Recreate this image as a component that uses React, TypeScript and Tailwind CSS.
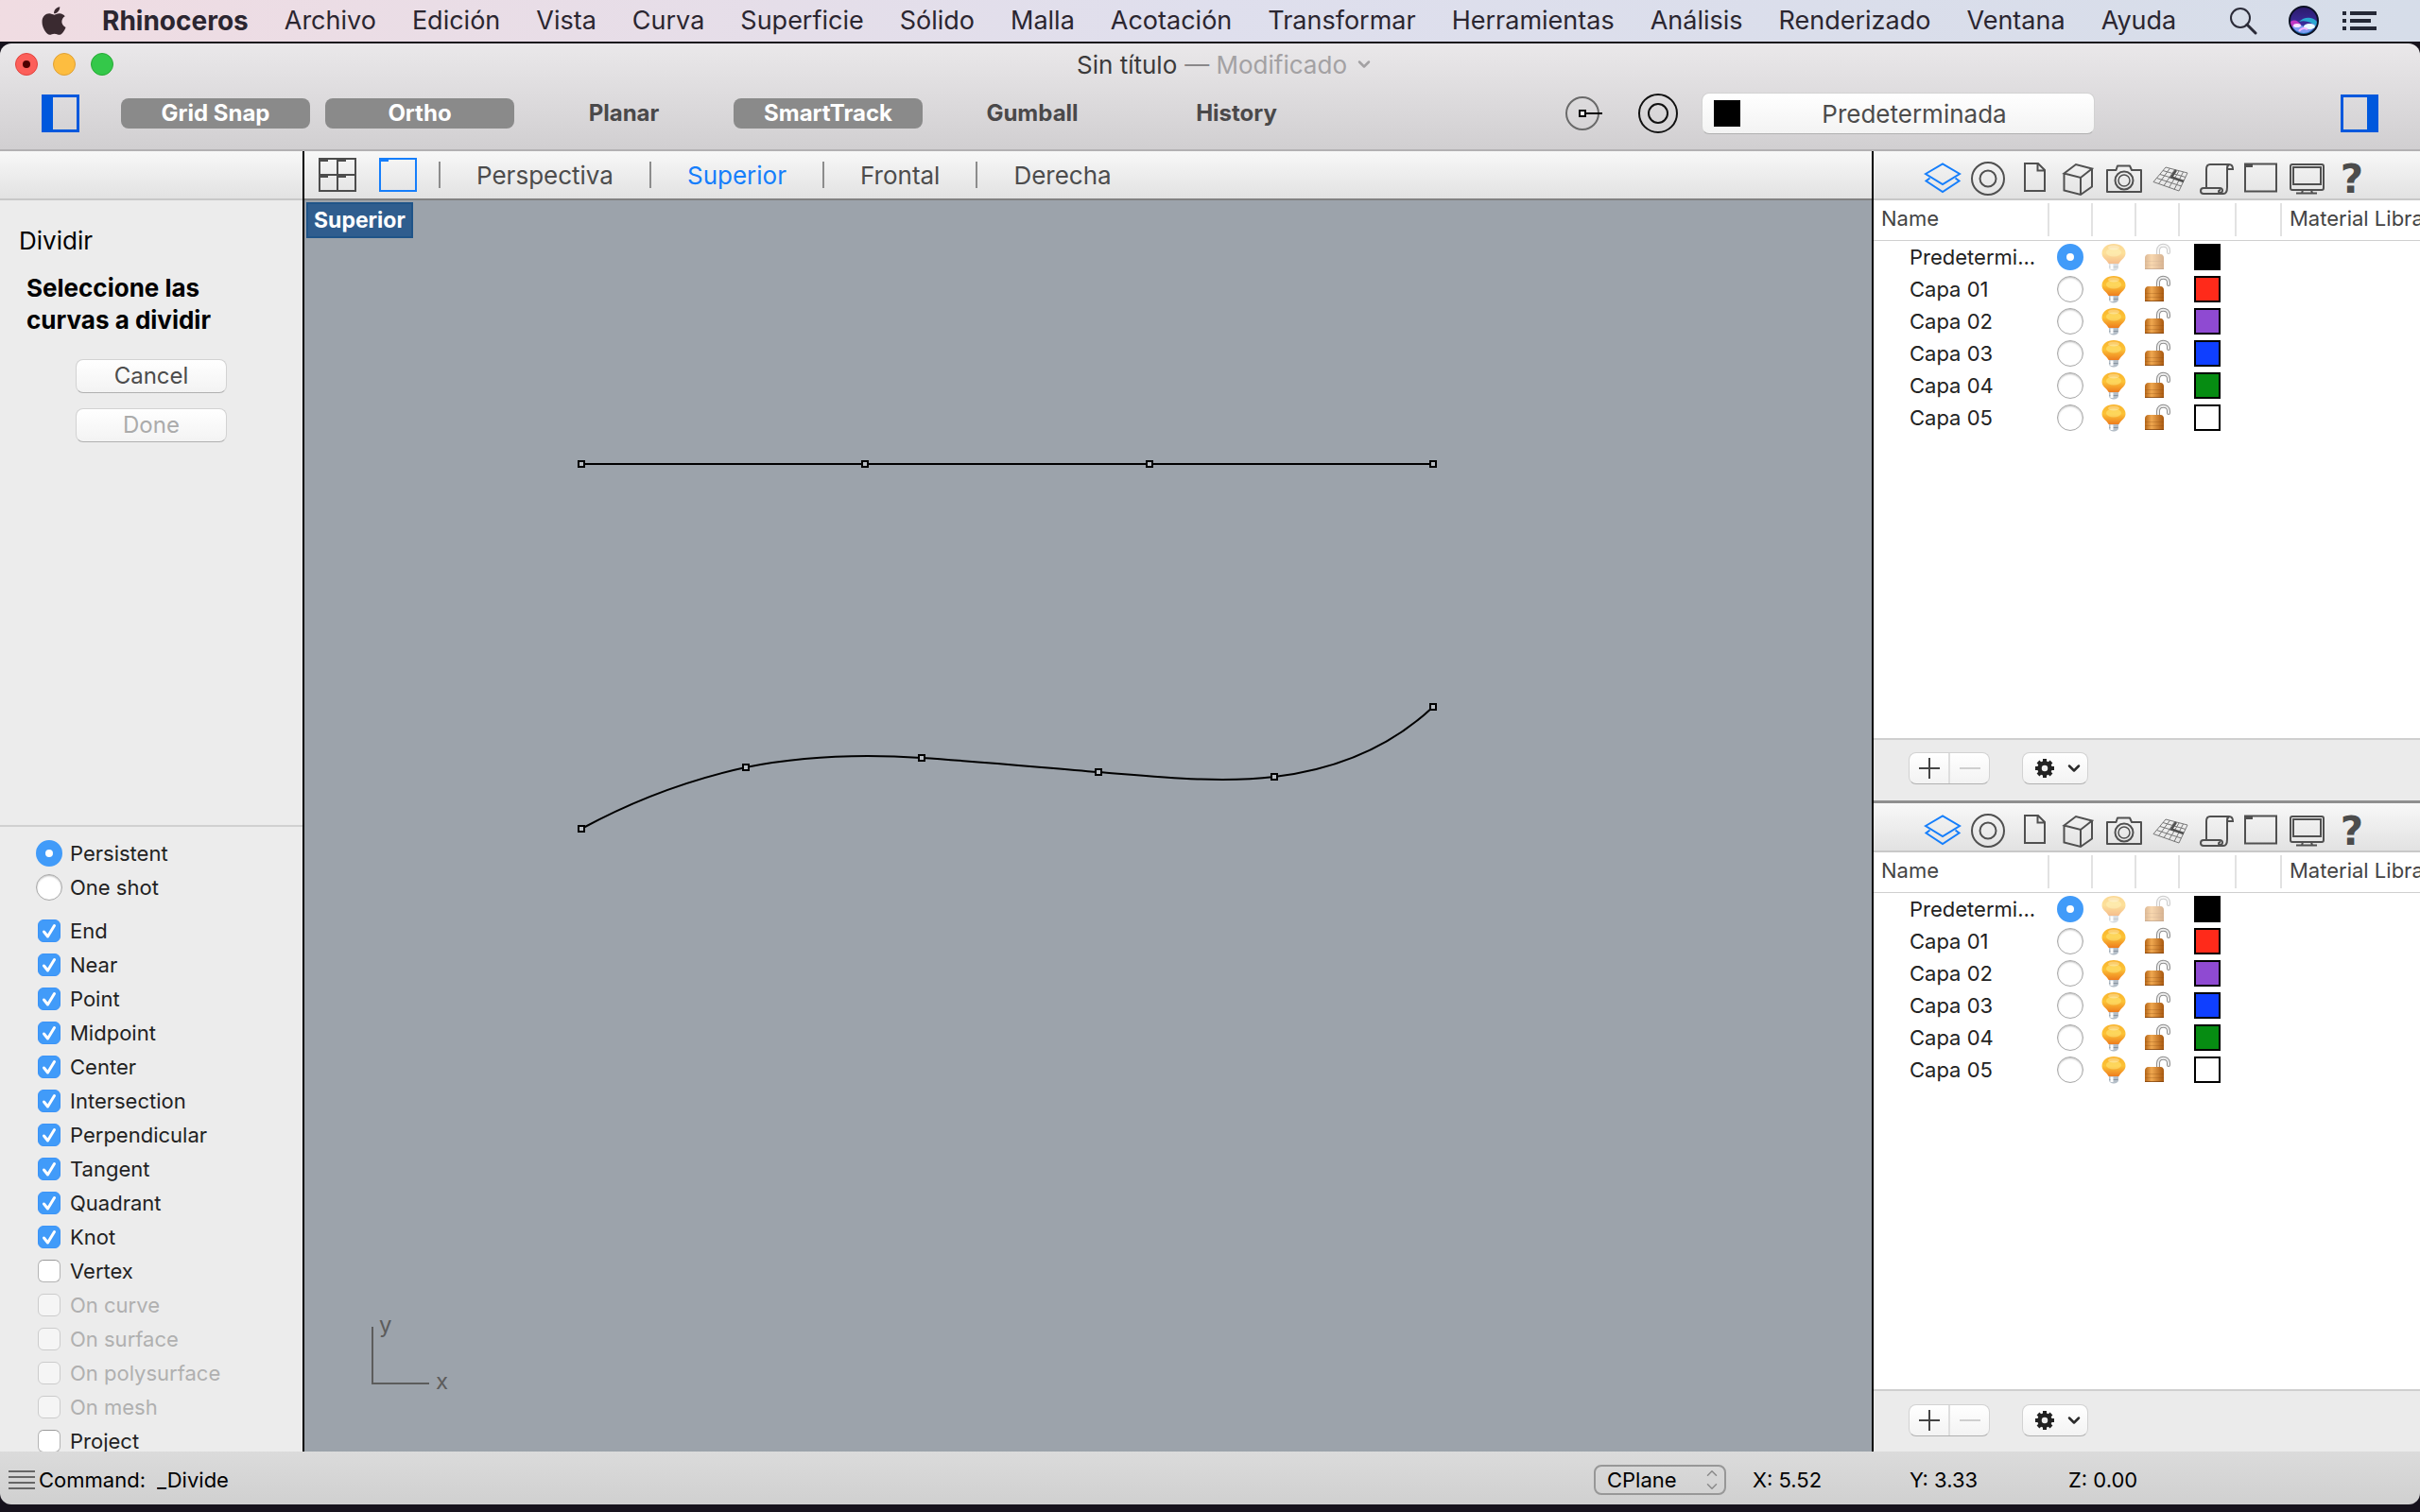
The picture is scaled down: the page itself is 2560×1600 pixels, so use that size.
import type { ReactNode } from "react";
import { FaApple } from "react-icons/fa";
import { ChevronDown, ChevronUp } from "lucide-react";

const menuItems = [
  "Archivo", "Edición", "Vista", "Curva", "Superficie", "Sólido", "Malla", "Acotación",
  "Transformar", "Herramientas", "Análisis", "Renderizado", "Ventana", "Ayuda",
];

const modelingAids = [
  { label: "Grid Snap", active: true },
  { label: "Ortho", active: true },
  { label: "Planar", active: false },
  { label: "SmartTrack", active: true },
  { label: "Gumball", active: false },
  { label: "History", active: false },
];

const viewTabs = ["Perspectiva", "Superior", "Frontal", "Derecha"];

const snaps = [
  { label: "End", checked: true },
  { label: "Near", checked: true },
  { label: "Point", checked: true },
  { label: "Midpoint", checked: true },
  { label: "Center", checked: true },
  { label: "Intersection", checked: true },
  { label: "Perpendicular", checked: true },
  { label: "Tangent", checked: true },
  { label: "Quadrant", checked: true },
  { label: "Knot", checked: true },
  { label: "Vertex" },
  { label: "On curve", disabled: true },
  { label: "On surface", disabled: true },
  { label: "On polysurface", disabled: true },
  { label: "On mesh", disabled: true },
  { label: "Project" },
];

const layers = [
  { name: "Predetermi...", color: "bg-black", current: true },
  { name: "Capa 01", color: "bg-[#ff2a1a]" },
  { name: "Capa 02", color: "bg-[#8f4ad2]" },
  { name: "Capa 03", color: "bg-[#0f3fff]" },
  { name: "Capa 04", color: "bg-[#068c12]" },
  { name: "Capa 05", color: "bg-white" },
];

const linePoints = [[293, 279], [593, 279], [894, 279], [1194, 279]];
const curvePoints = [[293, 665], [467, 600], [653, 590], [840, 605], [1026, 610], [1194, 536]];

const buttonLook = "bg-linear-to-b from-white to-[#f3f3f3] border border-[#d2d2d2] border-b-[#b0b0b0] rounded-lg";

/* ---------- menu bar ---------- */

const SiriIcon = () => (
  <svg width="34" height="34" viewBox="0 0 34 34">
    <circle cx="17" cy="17" r="15" fill="url(#siri)" stroke="#0b1023" strokeWidth="2" />
    <path d="M3 18c4-3 8-1 11 3s-4 6-6 5-5-4-5-8z" fill="#e23bd0" opacity=".8" />
    <path d="M31 18c-5-6-14-5-19 0 6-2 13 0 18 5z" fill="#27c9e0" opacity=".8" />
    <path d="M5 23c5-3 8-2 12 0 4-3 8-4 12-2-2 6-7 9-12 9s-10-3-12-7z" fill="#7f9cf5" />
    <ellipse cx="23" cy="23" rx="6" ry="3" fill="#eafcff" />
    <ellipse cx="10" cy="22" rx="4" ry="2" fill="#f6e6ff" />
    <path d="M12 28c2-3 5-4 9-2" fill="none" stroke="#f3b6ff" strokeWidth="2" />
  </svg>
);

const MenuBar = () => (
  <nav className="flex h-11 shrink-0 items-center bg-linear-to-r from-[#f0dce2] via-[#dfdfed] to-[#d6dde9] pl-10 pr-[46px] text-[27px] text-[#2b2630]">
    <button aria-label="Apple" className="mr-9 w-8 text-[#3a2a30]"><FaApple size={34} /></button>
    <div className="flex items-center gap-[38px] whitespace-nowrap">
      <button className="text-[28px] font-bold">Rhinoceros</button>
      {menuItems.map(item => <button key={item}>{item}</button>)}
    </div>
    <div className="ml-auto flex items-center gap-8">
      <button aria-label="Buscar">
        <svg width="30" height="30" viewBox="0 0 30 30" fill="none" stroke="#2b2b38" strokeLinecap="round">
          <circle cx="12" cy="12" r="10" strokeWidth="2" />
          <path d="M19 19l9 9" strokeWidth="3" />
        </svg>
      </button>
      <button aria-label="Siri"><SiriIcon /></button>
      <button aria-label="Notificaciones" className="-ml-2">
        <svg width="36" height="20" viewBox="0 0 36 20" fill="#242836">
          <path d="M0 0h4v4H0zM8 0h28v4H8zM0 8h4v4H0zM8 8h22v4H8zM0 16h4v4H0zM8 16h28v4H8z" />
        </svg>
      </button>
    </div>
  </nav>
);

/* ---------- window header ---------- */

const TitleBar = () => (
  <div className="grid h-11 grid-cols-[1fr_auto_1fr] items-center px-4">
    <div className="flex gap-4">
      <button aria-label="Cerrar" className="flex size-6 items-center justify-center rounded-full border border-[#e0443e] bg-[#fc5f5a]">
        <span className="size-2 rounded-full bg-[#4d0000]" />
      </button>
      <button aria-label="Minimizar" className="size-6 rounded-full border border-[#dea035] bg-[#fdbd40]" />
      <button aria-label="Ampliar" className="size-6 rounded-full border border-[#27aa35] bg-[#34c84a]" />
    </div>
    <h1 className="flex items-center gap-2 pl-8 text-[26px] text-[#3b3a3b]">
      Sin título <span className="text-[#a3a1a3]"><span className="text-[#8a888a]">—</span> Modificado</span>
      <ChevronDown size={20} strokeWidth={3} className="text-[#a3a1a3]" />
    </h1>
  </div>
);

const PanelToggle = ({ side }: { side: "left" | "right" }) => (
  <button aria-label={side === "left" ? "Panel izquierdo" : "Panel derecho"}>
    <svg width="40" height="40" viewBox="0 0 40 40" fill="none" stroke="#0058dd" strokeWidth="3">
      <path d="M1.5 1.5h37v37h-37z" />
      <path d={side === "left" ? "M0 0h12v40H0z" : "M28 0h12v40H28z"} fill="#0058dd" stroke="none" />
    </svg>
  </button>
);

const Toolbar = () => (
  <div className="flex items-center px-11 pt-2">
    <PanelToggle side="left" />
    <div className="ml-11 flex gap-4">
      {modelingAids.map(aid => (
        <button
          key={aid.label}
          className={
            aid.active
              ? "h-8 w-[200px] rounded-lg bg-[#8a8a8a] text-2xl leading-8 font-bold text-white"
              : "h-8 w-[200px] rounded-lg text-2xl leading-8 font-bold text-[#4a494a]"
          }
        >
          {aid.label}
        </button>
      ))}
    </div>
    <div className="ml-auto flex items-center">
      <button aria-label="Punto">
        <svg width="42" height="44" viewBox="0 0 42 44" fill="none">
          <circle cx="20" cy="22" r="17" stroke="#6a6a6a" strokeWidth="2" />
          <path d="M23 22h18" stroke="#000" strokeWidth="2" />
          <path d="M17 19h6v6h-6z" fill="#fff" stroke="#000" strokeWidth="2" />
        </svg>
      </button>
      <button aria-label="Propiedades" className="ml-9">
        <svg width="44" height="44" viewBox="0 0 44 44" fill="none" stroke="#111" strokeWidth="2">
          <circle cx="22" cy="22" r="20" />
          <circle cx="22" cy="22" r="10" />
        </svg>
      </button>
      <button className={`ml-6 mr-[260px] flex h-11 w-[416px] items-center pl-3 pr-1.5 text-[26px] text-[#4c4c4c] ${buttonLook}`}>
        <span className="size-7 bg-black" />
        <span className="grow">Predeterminada</span>
      </button>
      <PanelToggle side="right" />
    </div>
  </div>
);

/* ---------- left sidebar ---------- */

type OptionProps = {
  type: "radio" | "checkbox";
  label: string;
  checked?: boolean;
  disabled?: boolean;
};

const Option = ({ type, label, checked, disabled }: OptionProps) => (
  <label className={disabled ? "flex h-9 shrink-0 items-center text-[#b0b0b0]" : "flex h-9 shrink-0 items-center text-[#222]"}>
    <span className="grid w-7 place-items-center">
      {type === "radio" ? (
        <RadioDot name="snap-mode" checked={checked} />
      ) : (
        <>
          <input
            type="checkbox"
            defaultChecked={checked}
            disabled={disabled}
            className="col-start-1 row-start-1 size-6 appearance-none rounded-md border border-[#b4b4b4] border-t-[#9a9a9a] bg-white checked:border-[#3b93f7] checked:bg-[#419bf9] disabled:border-[#cccccc] disabled:bg-[#f5f5f5]"
          />
          {checked && (
            <svg width="24" height="24" viewBox="0 0 24 24" className="pointer-events-none col-start-1 row-start-1" fill="none" stroke="#fff" strokeWidth="3" strokeLinecap="round" strokeLinejoin="round">
              <path d="M6.500 13l4 5L17.500 6.500" />
            </svg>
          )}
        </>
      )}
    </span>
    <span className="ml-2">{label}</span>
  </label>
);

type RadioProps = { name: string; checked?: boolean; label?: string };

const RadioDot = ({ name, checked, label }: RadioProps) => (
  <input
    type="radio"
    name={name}
    aria-label={label}
    defaultChecked={checked}
    className="block size-7 appearance-none rounded-full border border-[#a8a8a8] bg-white shadow-[inset_0_1px_2px_#bbb] checked:border-10 checked:border-[#419bf9] checked:shadow-none"
  />
);

const Sidebar = () => (
  <aside className="flex w-[322px] shrink-0 flex-col border-r-2 border-black bg-[#ececec]">
    <div className="h-[52px] shrink-0 border-b-2 border-[#c8c8c8] bg-linear-to-b from-[#f8f8f8] to-[#e2e2e2]" />
    <section className="flex h-[661px] shrink-0 flex-col px-5 pt-6 text-[26px] leading-[34px] text-black">
      <h2 className="pt-0.5">Dividir</h2>
      <p className="w-60 pt-4 pl-2 font-bold">Seleccione las curvas a dividir</p>
      <div className="flex flex-col items-center gap-4 pt-6 text-2xl">
        <button className={`h-9 w-40 text-[#4c4c4c] ${buttonLook}`}>Cancel</button>
        <button disabled className={`h-9 w-40 text-[#ababab] ${buttonLook}`}>Done</button>
      </div>
    </section>
    <section className="flex min-h-0 grow flex-col overflow-hidden border-t-2 border-[#d0d0d0] pt-2.5 pl-[38px] text-[22px]">
      <Option type="radio" label="Persistent" checked />
      <Option type="radio" label="One shot" />
      <div className="flex flex-col pt-2.5">
        {snaps.map(snap => <Option key={snap.label} type="checkbox" {...snap} />)}
      </div>
    </section>
  </aside>
);

/* ---------- viewport ---------- */

const ViewTabs = () => (
  <div className="flex h-[52px] shrink-0 items-center border-b-2 border-[#828282] bg-linear-to-b from-[#f8f8f8] to-[#e2e2e2] pl-[15px] text-[26px] text-[#4c4c4c]">
    <button aria-label="Cuatro vistas">
      <svg width="40" height="36" viewBox="0 0 40 36" fill="none" stroke="#4c4c4c" strokeWidth="2">
        <path d="M1 1h38v34H1zM20 1v34M1 18h38" />
        <path d="M2 3h8M21 3h8M2 20h8M21 20h8" />
      </svg>
    </button>
    <button aria-label="Vista única" className="ml-6">
      <svg width="40" height="36" viewBox="0 0 40 36" fill="none" stroke="#157efb" strokeWidth="2">
        <path d="M1 1h38v34H1zM2 3h8" />
      </svg>
    </button>
    <div className="ml-[23px] flex items-center">
      {viewTabs.map(tab => (
        <div key={tab} className="flex items-center">
          <span className="h-7 w-0.5 bg-[#8c8c8c]" />
          <button className={tab === "Superior" ? "px-[38px] text-[#157efb]" : "px-[38px]"}>{tab}</button>
        </div>
      ))}
    </div>
  </div>
);

const Viewport = () => (
  <main className="flex min-w-0 grow flex-col">
    <ViewTabs />
    <div className="relative min-h-0 grow overflow-hidden bg-[#9ca3ab]">
      <svg className="absolute inset-0 h-full w-full" fill="none" stroke="#000" strokeWidth="2">
        <path d="M293 279H1194" />
        <path d="M293 665C350 634 407 613 467 600C527 588 592 586 653 590C716 594 778 600 840 605C902 610 968 617 1026 610C1086 603 1145 582 1194 536" />
        {[...linePoints, ...curvePoints].map(([x, y]) => (
          <rect key={`${x}-${y}`} x={x - 3} y={y - 3} width="6" height="6" fill="#b9bec4" />
        ))}
      </svg>
      <svg className="absolute bottom-0 left-0" width="200" height="150" viewBox="0 0 200 150" fill="none">
        <path d="M72 18v60h60" stroke="#5c5c5c" strokeWidth="2" />
        <text x="79" y="24" fontSize="24" fill="#5c5c5c">y</text>
        <text x="139" y="84" fontSize="24" fill="#5c5c5c">x</text>
      </svg>
      <button className="absolute top-0.5 left-0.5 h-[38px] border-2 border-[#1f5488] bg-[#2f5d8e] px-1.5 text-[23px] leading-8 font-bold text-white">
        Superior
      </button>
    </div>
  </main>
);

/* ---------- layer panels ---------- */

const panelTabs: { label: string; art: ReactNode }[] = [
  {
    label: "Capas",
    art: <path stroke="#157efb" d="M6 24L24 13.500L42 24L24 35zM10.500 28.500L6.500 31.500L24 43L41.500 31.500L37.500 28.500" />,
  },
  { label: "Propiedades", art: <><circle cx="24" cy="29" r="17" /><circle cx="24" cy="29" r="8.500" /></> },
  { label: "Documento", art: <path d="M15 13h14l7 7v22H15zM28.500 13v7.500H36" /> },
  { label: "Bloques", art: <path d="M8.500 23.500L21 14L38 18.500L26 28zV41.500L26 46L38 37.500V18.500M26 28V46" /> },
  {
    label: "Cámara",
    art: (
      <>
        <path d="M6 20h9.500l1.500-4.500h13l2 4.500h10v23H6z" strokeLinejoin="round" />
        <circle cx="24" cy="31" r="9.500" />
        <circle cx="24" cy="31" r="6" strokeWidth="1.500" />
      </>
    ),
  },
  {
    label: "Plano de construcción",
    art: (
      <>
        <path strokeWidth="1" stroke="#777" d="M7 32.500L20 17L43 23L34 42zM10.500 28.500L36.500 37M14 24.500L39 32M17 20.500L41 27.500M12.500 34.500L24.500 18M18 36.500L29.500 19.500M23.500 38.500L34 21M29 40.500L38.500 22" />
        <path strokeWidth="2.500" d="M31 20L26 27.500L39 32" />
      </>
    ),
  },
  {
    label: "Notas",
    art: <path d="M15 38V19c0-3 1-5 4-5h20c3 0 4 2 4 5h-6c0-3 0-4 2-5M37 19v19c0 4-1 7-4 7H12c-4 0-4-6 0-6h17c4 0 4 5 0 5c-2-1-1-3 1-3" />,
  },
  { label: "Vistas", art: <><path d="M8 13.500h33v29H8z" /><path strokeWidth="3" d="M9 15.500h7" /></> },
  {
    label: "Pantalla",
    art: (
      <>
        <rect x="8" y="14" width="35" height="27" rx="2" />
        <rect x="11" y="17" width="29" height="18" />
        <path d="M21 41l-1 3.500M30 41l1 3.500M14 44.500h22" />
      </>
    ),
  },
];

const BulbIcon = () => (
  <svg width="28" height="30" viewBox="0 0 28 30">
    <path d="M14 1C7 1 1.500 5 1.500 11c0 3.500 2.500 5.500 4.500 7.500 2 2 2.500 4.500 4.500 4.500h7c2 0 2.500-2.500 4.500-4.500 2-2 4.500-4 4.500-7.500C26.500 5 21 1 14 1z" fill="url(#bulb)" />
    <ellipse cx="14" cy="10" rx="8" ry="4.500" fill="#fff08a" opacity=".45" />
    <ellipse cx="14" cy="5" rx="6" ry="2.500" fill="#fff" opacity=".3" />
    <path d="M9 22h10v4c0 2-2.500 3.500-5 3.500S9 28 9 26z" fill="#b4bec8" />
    <path d="M9.500 25.500h9" stroke="#8994a0" />
    <path d="M12 22.500v5.500" stroke="#fff" strokeWidth="3" />
  </svg>
);

const LockIcon = () => (
  <svg width="28" height="30" viewBox="0 0 28 30">
    <path d="M15 14V8c0-7 11-7 11 0v2" fill="none" stroke="#8f8f8f" strokeWidth="4" strokeLinecap="round" />
    <path d="M15 14V8c0-7 11-7 11 0v2" fill="none" stroke="#ececec" strokeWidth="2" strokeLinecap="round" />
    <path d="M1 16c0-2 1-4 4-4h12c3 0 4 2 4 4v12H1z" fill="url(#lock)" />
    <path d="M1 19.500h20M1 23.500h20" stroke="#8a4a10" opacity=".25" />
    <path d="M1 27.500h20" stroke="#7a3d0a" opacity=".7" />
  </svg>
);

const GearIcon = () => (
  <svg width="22" height="22" viewBox="-11 -11 22 22">
    <path d="M0-10V10M-10 0H10M-7-7L7 7M7-7L-7 7" stroke="#222" strokeWidth="4" />
    <circle r="5.500" fill="#eee" stroke="#222" strokeWidth="4.500" />
  </svg>
);

type LayerPanelProps = { id: string };

const LayerPanel = ({ id }: LayerPanelProps) => (
  <section className="flex min-h-0 flex-1 flex-col">
    <div className="flex h-[52px] shrink-0 border-b-2 border-[#c8c8c8] bg-linear-to-b from-[#f8f8f8] to-[#e2e2e2] pl-[49px]">
      {panelTabs.map(tab => (
        <button key={tab.label} aria-label={tab.label} className="w-12">
          <svg width="48" height="50" viewBox="0 0 48 50" fill="none" stroke="#505050" strokeWidth="2">{tab.art}</svg>
        </button>
      ))}
      <button className="w-12 pt-2 pl-0.5 text-center text-[42px] leading-[44px] font-bold text-[#4c4c4c] [font-family:'DejaVu_Sans',sans-serif]">?</button>
    </div>
    <div className="min-h-0 grow overflow-hidden bg-white">
      <table className="w-full table-fixed border-separate border-spacing-0 text-[22px] text-[#222]">
        <thead>
          <tr className="h-[43px] text-left align-top text-[22px] text-[#444]">
            <th className="w-[186px] border-b border-[#cfcfcf] p-0 pt-[3px] font-normal">
              <div className="h-[35px] border-r-2 border-[#e2e2e2] pl-2">Name</div>
            </th>
            <th className="w-[46px] border-b border-[#cfcfcf] p-0 pt-[3px]"><div className="h-[35px] border-r-2 border-[#e2e2e2]" /></th>
            <th className="w-[46px] border-b border-[#cfcfcf] p-0 pt-[3px]"><div className="h-[35px] border-r-2 border-[#e2e2e2]" /></th>
            <th className="w-[46px] border-b border-[#cfcfcf] p-0 pt-[3px]"><div className="h-[35px] border-r-2 border-[#e2e2e2]" /></th>
            <th className="w-[60px] border-b border-[#cfcfcf] p-0 pt-[3px]"><div className="h-[35px] border-r-2 border-[#e2e2e2]" /></th>
            <th className="w-[48px] border-b border-[#cfcfcf] p-0 pt-[3px]"><div className="h-[35px] border-r-2 border-[#e2e2e2]" /></th>
            <th className="overflow-hidden border-b border-[#cfcfcf] p-0 pt-[3px] font-normal whitespace-nowrap">
              <div className="h-[35px] pl-2">Material Library</div>
            </th>
          </tr>
        </thead>
        <tbody>
          {layers.map(layer => (
            <tr key={layer.name} className="h-[34px]">
              <td className="p-0 pl-[38px] leading-8 whitespace-nowrap">{layer.name}</td>
              <td className="p-0 pl-2"><RadioDot name={id} checked={layer.current} label={layer.name} /></td>
              <td className={layer.current ? "p-0 pl-2 opacity-50" : "p-0 pl-2"}><BulbIcon /></td>
              <td className={layer.current ? "p-0 pl-2 opacity-45" : "p-0 pl-2"}><LockIcon /></td>
              <td className="p-0 pl-[15px]">
                <button aria-label={`Color ${layer.name}`} className={`block size-7 border-2 border-black ${layer.color}`} />
              </td>
              <td colSpan={2} className="p-0" />
            </tr>
          ))}
        </tbody>
      </table>
    </div>
    <div className="flex h-[66px] shrink-0 items-center gap-[34px] border-t-2 border-[#cfcfcf] bg-[#ebebeb] pb-[3px] pl-[37px]">
      <div className={`flex h-[34px] w-[86px] ${buttonLook}`}>
        <button aria-label="Añadir" className="flex flex-1 items-center justify-center border-r-2 border-[#dedede]">
          <svg width="24" height="24" stroke="#444" strokeWidth="2"><path d="M12 1v22M1 12h22" /></svg>
        </button>
        <button aria-label="Quitar" disabled className="flex flex-1 items-center justify-center">
          <svg width="24" height="24" stroke="#cfcfcf" strokeWidth="2"><path d="M1 12h22" /></svg>
        </button>
      </div>
      <button aria-label="Opciones" className={`flex h-[34px] w-[70px] items-center gap-2.5 pl-3 text-[#2b2b2b] ${buttonLook}`}>
        <GearIcon />
        <ChevronDown size={20} strokeWidth={3} />
      </button>
    </div>
  </section>
);

/* ---------- status bar ---------- */

const StatusBar = () => (
  <footer className="flex h-14 shrink-0 items-center bg-linear-to-b from-[#dbdbdb] to-[#d0d0d0] pl-2 text-[22px] text-black">
    <svg width="28" height="20" className="ml-px mt-1 shrink-0" stroke="#666" strokeWidth="2">
      <path d="M0 1h28M0 7h28M0 13h28M0 19h28" />
    </svg>
    <label htmlFor="command" className="mt-1 ml-1">Command:</label>
    <input id="command" defaultValue="_Divide" className="mt-1 ml-3 min-w-0 grow bg-transparent outline-none" />
    <div className="mt-1 flex w-[874px] shrink-0 items-center">
      <div className="grid w-[140px]">
        <select aria-label="CPlane" className="col-start-1 row-start-1 h-8 appearance-none rounded-lg border-2 border-[#979797] pl-3 text-[22px] leading-7">
          <option>CPlane</option>
        </select>
        <span className="pointer-events-none col-start-1 row-start-1 mr-1.5 flex flex-col items-center justify-center justify-self-end text-[#8a8a8a]">
          <ChevronUp size={18} className="-mb-1" />
          <ChevronDown size={18} />
        </span>
      </div>
      <span className="ml-7 w-[166px]">X: 5.52</span>
      <span className="w-[166px]">Y: 3.33</span>
      <span className="pl-0.5">Z: 0.00</span>
    </div>
  </footer>
);

const Gradients = () => (
  <svg className="absolute size-0" aria-hidden="true">
    <defs>
      <linearGradient id="bulb" x1="0" y1="0" x2="0" y2="1">
        <stop offset="0" stopColor="#f9b32c" />
        <stop offset=".45" stopColor="#fcc336" />
        <stop offset="1" stopColor="#ec761c" />
      </linearGradient>
      <linearGradient id="lock" x1="0" y1="0" x2="1" y2="0">
        <stop offset="0" stopColor="#b46416" />
        <stop offset=".35" stopColor="#f0a850" />
        <stop offset="1" stopColor="#a8580f" />
      </linearGradient>
      <linearGradient id="siri" x1="0" y1="0" x2="0" y2="1">
        <stop offset="0" stopColor="#2b1a6b" />
        <stop offset=".6" stopColor="#3a2a9a" />
        <stop offset="1" stopColor="#1d7fb0" />
      </linearGradient>
    </defs>
  </svg>
);

export default function App() {
  return (
    <div className="flex h-screen flex-col overflow-hidden bg-[#16121c] [font-family:Inter,'Liberation_Sans',sans-serif]">
      <Gradients />
      <MenuBar />
      <div className="mt-0.5 mb-2 flex min-h-0 grow flex-col overflow-hidden rounded-xl">
        <header className="h-[114px] shrink-0 border-b-2 border-[#b3b1b3] bg-linear-to-b from-[#eae8ea] to-[#d1cfd1]">
          <TitleBar />
          <Toolbar />
        </header>
        <div className="flex min-h-0 grow">
          <Sidebar />
          <Viewport />
          <aside className="flex w-[580px] shrink-0 flex-col border-l-2 border-black">
            <LayerPanel id="layers-top" />
            <div className="h-[3px] shrink-0 bg-[#8f8f8f]" />
            <LayerPanel id="layers-bottom" />
          </aside>
        </div>
        <StatusBar />
      </div>
    </div>
  );
}
